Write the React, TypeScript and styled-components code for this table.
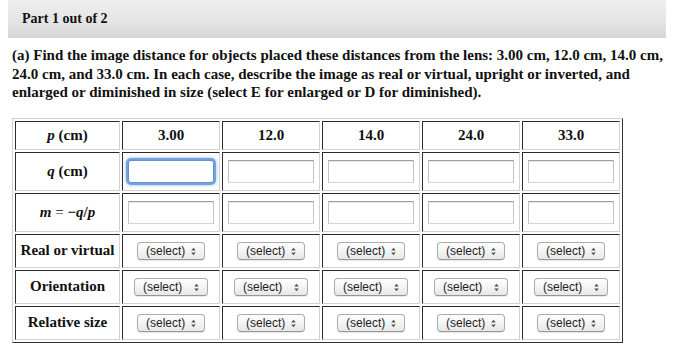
import React from 'react'
import styled, { createGlobalStyle } from 'styled-components'

const GlobalStyle = createGlobalStyle`
  html, body {
    margin: 0;
    padding: 0;
    background: #ffffff;
  }
  body {
    font-family: "Liberation Serif", "Times New Roman", serif;
    color: #111111;
  }
`

const DISTANCES = ['3.00', '12.0', '14.0', '24.0', '33.0']

const Page = styled.div`
  padding: 0 8px;
  width: 682px;
`

const PartBar = styled.div`
  height: 38px;
  width: 658px;
  display: flex;
  align-items: center;
  padding-left: 14px;
  box-sizing: border-box;
  background: linear-gradient(#efefef, #e4e4e4 60%, #d6d6d6);
  font-size: 14px;
  font-weight: bold;
`

const Question = styled.p`
  margin: 8px 0 0 4px;
  width: 660px;
  font-size: 15px;
  line-height: 18.5px;
  font-weight: bold;
`

const Table = styled.table`
  margin: 16px 0 0 4px;
  border-collapse: separate;
  border-spacing: 2px;
  table-layout: fixed;
  border: 1px solid;
  border-color: #cfcfcf #333333 #333333 #cfcfcf;
`

type CellProps = {
  $w?: number
  $h: number
}

const Cell = styled.td<CellProps>`
  box-sizing: border-box;
  width: ${({ $w }) => ($w ? `${$w}px` : 'auto')};
  height: ${({ $h }) => $h}px;
  padding: 0;
  text-align: center;
  vertical-align: middle;
  font-size: 15px;
  font-weight: bold;
  border: 1px solid;
  border-color: #2b2b2b #d2d2d2 #d2d2d2 #2b2b2b;
`

const Var = styled.i`
  font-style: italic;
`

const Plain = styled.span`
  font-weight: normal;
`

const TextBox = styled.input<{ $focused?: boolean }>`
  box-sizing: border-box;
  width: 86px;
  height: 23px;
  padding: 0 3px;
  display: block;
  margin: 0 auto;
  outline: none;
  border: 1px solid;
  border-color: ${({ $focused }) =>
    $focused ? '#5f93d3' : '#9e9e9e #c4c4c4 #d6d6d6 #c4c4c4'};
  border-radius: ${({ $focused }) => ($focused ? '3px' : '0')};
  box-shadow: ${({ $focused }) =>
    $focused
      ? '0 0 0 2px rgba(104, 152, 214, 0.85), 0 0 3px 3px rgba(120, 165, 225, 0.45)'
      : 'inset 0 1px 0 #e8e8e8'};
  background: #ffffff;
`

const SelectBox = styled.div<{ $wide?: boolean }>`
  box-sizing: border-box;
  width: ${({ $wide }) => ($wide ? 74 : 68)}px;
  height: 18px;
  margin: 1px auto 0;
  display: flex;
  align-items: center;
  justify-content: space-between;
  padding: 0 8px;
  border: 1px solid #acacac;
  border-bottom-color: #969696;
  border-radius: 4px;
  background: linear-gradient(#ffffff, #f4f4f4 50%, #e7e7e7);
  box-shadow: 0 1px 1px rgba(0, 0, 0, 0.1);
  font-family: "Liberation Sans", Arial, sans-serif;
  font-size: 12px;
  font-weight: normal;
  color: #1e1e1e;
  cursor: default;
`

const Arrows = () => (
  <svg width="5" height="9" viewBox="0 0 5 9">
    <path d="M2.5 0.8 L4.8 3.6 L0.2 3.6 Z" fill="#555" />
    <path d="M2.5 8.2 L4.8 5.4 L0.2 5.4 Z" fill="#555" />
  </svg>
)

const Select = ({ wide }: { wide?: boolean }) => (
  <SelectBox $wide={wide}>
    <span>(select)</span>
    <Arrows />
  </SelectBox>
)

const SELECT_ROWS = [
  { label: 'Real or virtual', wide: false },
  { label: 'Orientation', wide: true },
  { label: 'Relative size', wide: false }
]

export default function App() {
  return (
    <Page>
      <GlobalStyle />
      <PartBar>Part 1 out of 2</PartBar>
      <Question>
        (a) Find the image distance for objects placed these distances from the
        lens: 3.00 cm, 12.0 cm, 14.0 cm, 24.0 cm, and 33.0 cm. In each case,
        describe the image as real or virtual, upright or inverted, and
        enlarged or diminished in size (select E for enlarged or D for
        diminished).
      </Question>
      <Table>
        <tbody>
          <tr>
            <Cell $w={105} $h={29}>
              <Var>p</Var> (cm)
            </Cell>
            {DISTANCES.map((d) => (
              <Cell key={d} $w={98} $h={29}>
                {d}
              </Cell>
            ))}
          </tr>
          <tr>
            <Cell $h={39}>
              <Var>q</Var> (cm)
            </Cell>
            {DISTANCES.map((d, i) => (
              <Cell key={d} $h={39}>
                <TextBox type="text" $focused={i === 0} />
              </Cell>
            ))}
          </tr>
          <tr>
            <Cell $h={39}>
              <Var>m</Var> <Plain>=</Plain> −<Var>q</Var>/<Var>p</Var>
            </Cell>
            {DISTANCES.map((d) => (
              <Cell key={d} $h={39}>
                <TextBox type="text" />
              </Cell>
            ))}
          </tr>
          {SELECT_ROWS.map((row) => (
            <tr key={row.label}>
              <Cell $h={34}>{row.label}</Cell>
              {DISTANCES.map((d) => (
                <Cell key={d} $h={34}>
                  <Select wide={row.wide} />
                </Cell>
              ))}
            </tr>
          ))}
        </tbody>
      </Table>
    </Page>
  )
}
